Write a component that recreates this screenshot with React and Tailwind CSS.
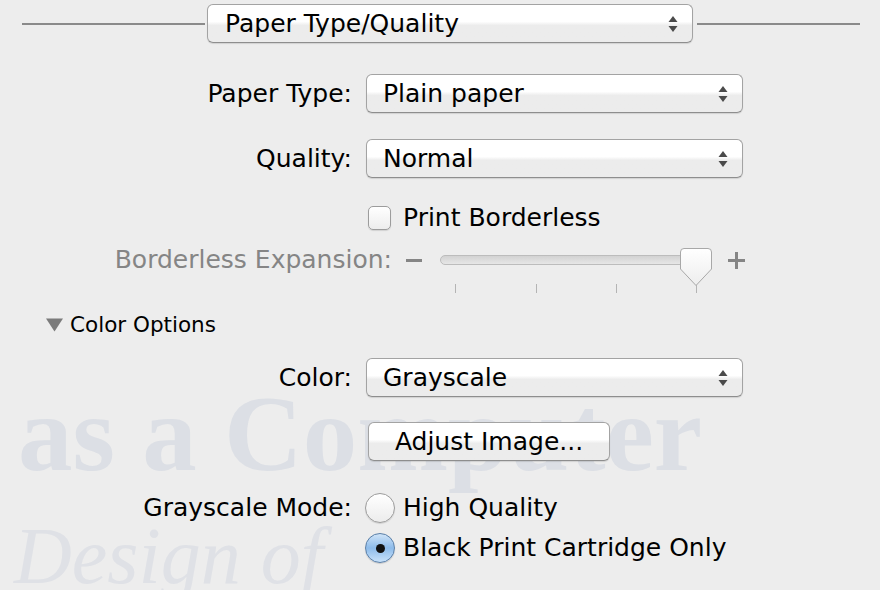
import React from 'react';

function Stepper() {
  return (
    <svg width="10" height="18" viewBox="0 0 10 18" className="shrink-0">
      <path d="M5 1 L9.5 7 L0.5 7 Z" fill="#4a4a4a" />
      <path d="M0.5 11 L9.5 11 L5 17 Z" fill="#4a4a4a" />
    </svg>
  );
}

function Popup({ label, className = '' }) {
  return (
    <div className={`flex items-center justify-between h-[39px] pl-[16px] pr-[14px] rounded-[6px] border border-[#a3a3a3] border-b-[#8e8e8e] bg-gradient-to-b from-white from-45% to-[#ececec] to-55% shadow-[0_1px_1px_rgba(0,0,0,0.12)] ${className}`}>
      <span className="text-[25px] leading-[30px] text-black">{label}</span>
      <Stepper />
    </div>
  );
}

function Row({ label, children, className = '' }) {
  return (
    <div className={`flex items-center ${className}`}>
      <div className="w-[352px] shrink-0 text-right text-[25px] leading-[30px] text-black">{label}</div>
      <div className="ml-[14px] flex items-center">{children}</div>
    </div>
  );
}

function Radio({ checked }) {
  if (checked) {
    return (
      <div className="w-[30px] h-[30px] rounded-full border border-[#5a7fa8] bg-gradient-to-b from-[#cfe4f8] via-[#8dbbea] to-[#c9e2fa] flex items-center justify-center shadow-[0_1px_1px_rgba(0,0,0,0.15)]">
        <div className="w-[9px] h-[9px] rounded-full bg-[#111]" />
      </div>
    );
  }
  return (
    <div className="w-[30px] h-[30px] rounded-full border border-[#9c9c9c] bg-gradient-to-b from-white to-[#ececec] shadow-[0_1px_1px_rgba(0,0,0,0.12)]" />
  );
}

export default function App() {
  return (
    <div className="relative w-[880px] h-[590px] overflow-hidden bg-[#ededed] font-['DejaVu_Sans',sans-serif]">
      {/* watermark behind the sheet */}
      <div className="absolute left-[18px] top-[379px] z-0 text-[109px] leading-[109px] font-bold text-[#dcdfe5] font-['Liberation_Serif',serif] whitespace-nowrap select-none">as a Computer</div>
      <div className="absolute left-[14px] top-[516px] z-0 text-[80px] leading-[80px] italic text-[#dfe1e6] font-['Liberation_Serif',serif] whitespace-nowrap select-none">Design of</div>

      <div className="relative z-10 flex flex-col">
        {/* section header */}
        <div className="flex items-center pt-[4px] pl-[22px]">
          <div className="w-[183px] h-[2px] bg-[#8a8a8a]" />
          <Popup label="Paper Type/Quality" className="w-[486px] ml-[2px] mr-[4px] pl-[17px]" />
          <div className="w-[163px] h-[2px] bg-[#8a8a8a]" />
        </div>

        <Row label="Paper Type:" className="mt-[31px]">
          <Popup label="Plain paper" className="w-[377px]" />
        </Row>
        <Row label="Quality:" className="mt-[26px]">
          <Popup label="Normal" className="w-[377px]" />
        </Row>

        <div className="flex items-center mt-[28px] h-[24px] pl-[368px]">
          <div className="w-[23px] h-[24px] rounded-[5px] border border-[#9c9c9c] bg-gradient-to-b from-white to-[#ededed] shadow-[0_1px_1px_rgba(0,0,0,0.12)]" />
          <span className="ml-[12px] text-[25px] leading-[30px] text-black">Print Borderless</span>
        </div>

        {/* slider row */}
        <div className="flex items-start mt-[11px] h-[52px]">
          <div className="w-[392px] shrink-0 h-[38px] leading-[38px] text-right text-[25px] text-[#858585]">Borderless Expansion:</div>
          <div className="ml-[14px] h-[38px] flex items-center">
            <div className="w-[16px] h-[3px] bg-[#858585]" />
          </div>
          <div className="relative ml-[18px] w-[272px] h-[52px]">
            <div className="absolute left-0 top-[14px] w-[262px] h-[10px] rounded-full border border-[#bcbcbc] bg-gradient-to-b from-[#d2d2d2] to-[#e6e6e6]" />
            <div className="absolute left-[15px] top-[43px] w-px h-[9px] bg-[#b4b4b4]" />
            <div className="absolute left-[96px] top-[43px] w-px h-[9px] bg-[#b4b4b4]" />
            <div className="absolute left-[176px] top-[43px] w-px h-[9px] bg-[#b4b4b4]" />
            <div className="absolute left-[256px] top-[43px] w-px h-[9px] bg-[#b4b4b4]" />
            <svg className="absolute left-[239px] top-[6px]" width="34" height="40" viewBox="0 0 34 40">
              <defs>
                <linearGradient id="thumb" x1="0" y1="0" x2="0" y2="1">
                  <stop offset="0" stopColor="#ffffff" />
                  <stop offset="1" stopColor="#ededed" />
                </linearGradient>
              </defs>
              <path d="M5 1.5 H29 Q32.5 1.5 32.5 5 V22 L17 38.5 L1.5 22 V5 Q1.5 1.5 5 1.5 Z" fill="url(#thumb)" stroke="#a8a8a8" strokeWidth="1" />
            </svg>
          </div>
          <div className="ml-[16px] h-[38px] flex items-center">
            <div className="relative w-[17px] h-[17px]">
              <div className="absolute left-0 top-[7px] w-[17px] h-[3px] bg-[#858585]" />
              <div className="absolute left-[7px] top-0 w-[3px] h-[17px] bg-[#858585]" />
            </div>
          </div>
        </div>

        {/* disclosure */}
        <div className="flex items-center mt-[20px] h-[24px] pl-[46px]">
          <svg width="17" height="14" viewBox="0 0 17 14">
            <path d="M0 0.5 H17 L8.5 13.5 Z" fill="#7b7b7b" />
          </svg>
          <span className="ml-[7px] text-[21.5px] leading-[26px] text-black">Color Options</span>
        </div>

        <Row label="Color:" className="mt-[21px]">
          <Popup label="Grayscale" className="w-[377px]" />
        </Row>

        <div className="mt-[25px] pl-[368px]">
          <div className="w-[242px] h-[39px] flex items-center justify-center rounded-[6px] border border-[#a3a3a3] border-b-[#8e8e8e] bg-gradient-to-b from-white from-45% to-[#ececec] to-55% shadow-[0_1px_1px_rgba(0,0,0,0.12)] text-[25px] leading-[30px] text-black">
            Adjust Image...
          </div>
        </div>

        <div className="flex items-center mt-[32px] h-[30px]">
          <div className="w-[352px] shrink-0 text-right text-[25px] leading-[30px] text-black">Grayscale Mode:</div>
          <div className="ml-[13px]"><Radio /></div>
          <span className="ml-[8px] text-[25px] leading-[30px] text-black">High Quality</span>
        </div>
        <div className="flex items-center mt-[10px] h-[30px] pl-[365px]">
          <Radio checked />
          <span className="ml-[8px] text-[25px] leading-[30px] text-black">Black Print Cartridge Only</span>
        </div>
      </div>
    </div>
  );
}
